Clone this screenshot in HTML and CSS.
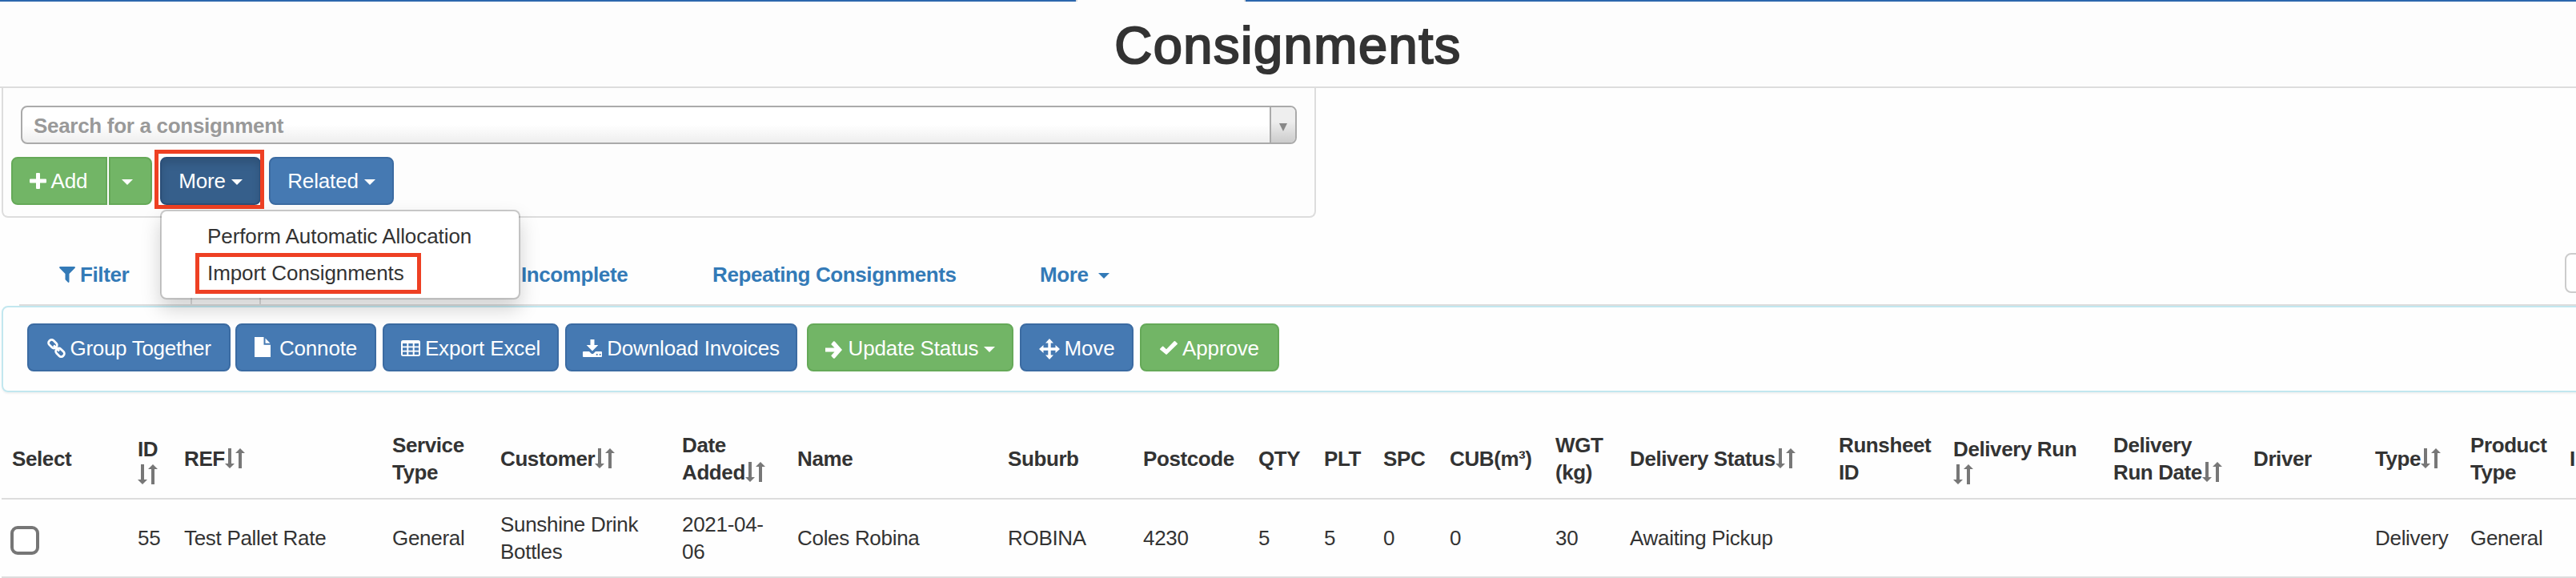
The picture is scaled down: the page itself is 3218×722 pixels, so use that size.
FILE: index.html
```html
<!DOCTYPE html>
<html lang="en">
<head>
    <meta charset="UTF-8">
    <meta name="viewport" content="width=device-width, initial-scale=1.0">
    <title>Consignments</title>
    <link rel="stylesheet" href="styles.css">
</head>
<body>
    <svg class="sprite" width="0" height="0">
        <symbol id="sort" viewBox="0 0 25 25">
            <path d="M4 0h4v19h4l-6 6-6-6h4zM17 25h4V6h4l-6-6-6 6h4z"/>
        </symbol>
    </svg>

    <div class="topbar"><span class="topbar-tab"></span></div>
    <header class="page-header">
        <h1>Consignments</h1>
    </header>

    <section class="well">
        <div class="search">
            <span class="search-text">Search for a consignment</span>
            <span class="search-arrow"><i></i></span>
        </div>
        <div class="actions">
            <button class="btn green add">
                <svg class="icon" width="21" height="20" viewBox="0 0 21 20"><path d="M8 1q0-1 1-1h3q1 0 1 1v6.500h7q1 0 1 1v3q0 1-1 1h-7V19q0 1-1 1H9q-1 0-1-1v-6.500H1q-1 0-1-1v-3q0-1 1-1h7z"/></svg>
                Add
            </button>
            <button class="btn green add-caret"><i class="caret"></i></button>
            <div class="dropdown">
                <button class="btn blue active more">More <i class="caret"></i></button>
                <span class="mark mark-more"></span>
                <ul class="menu">
                    <li>Perform Automatic Allocation</li>
                    <li>Import Consignments<span class="mark mark-import"></span></li>
                </ul>
            </div>
            <button class="btn blue related">Related <i class="caret"></i></button>
        </div>
    </section>

    <nav class="tabs">
        <a class="tab tab-filter">
            <svg class="icon" width="20" height="20" viewBox="0 0 20 20"><path d="M1 0h18q1.500.5.700 1.800L12.500 9v10q-.4 1.300-1.500.7l-3-3q-.500-.4-.5-1V9L.3 1.800Q-.4.5 1 0z"/></svg>
            Filter
        </a>
        <a class="tab-current"></a>
        <span></span>
        <a class="tab">Incomplete</a>
        <a class="tab">Repeating Consignments</a>
        <a class="tab">More <i class="caret"></i></a>
        <input class="tab-search" type="text">
    </nav>

    <section class="toolbar">
        <button class="btn blue group">
            <svg class="icon" width="23" height="24" viewBox="0 0 23 24"><g fill="none" stroke="#fff" stroke-width="2.800"><rect x="1.200" y="3" width="11.500" height="7.500" rx="3.300" transform="rotate(45 7 6.700)"/><rect x="10.300" y="13.500" width="11.500" height="7.500" rx="3.300" transform="rotate(45 16 17.200)"/><path d="M8 8.500l7 7"/></g></svg>
            Group Together
        </button>
        <button class="btn blue connote">
            <svg class="icon icon-file" width="20" height="25" viewBox="0 0 20 25"><path d="M0 0h11.500v9.700H20V25H0zM13.500 1.500l6 6.300h-6z"/></svg>
            Connote
        </button>
        <button class="btn blue export">
            <svg class="icon" width="24" height="20" viewBox="0 0 24 20"><path fill-rule="evenodd" d="M2.500 0h19Q24 0 24 2.500v15q0 2.500-2.500 2.500h-19Q0 20 0 17.500v-15Q0 0 2.500 0zM2 4v3.500h5.300V4zm7.300 0v3.500h5.400V4zm7.400 0v3.500H22V4zM2 9.300v3.500h5.300V9.300zm7.300 0v3.500h5.400V9.300zm7.400 0v3.500H22V9.300zM2 14.600V18h5.300v-3.400zm7.300 0V18h5.400v-3.400zm7.400 0V18H22v-3.400z"/></svg>
            Export Excel
        </button>
        <button class="btn blue download">
            <svg class="icon" width="24" height="22" viewBox="0 0 24 22"><path fill-rule="evenodd" d="M9.500 0h5v7h4.800L12 14.500 4.700 7h4.800zM1 15h7l2.500 2.500q1.500 1 3 0L16 15h7q1 0 1 1v5q0 1-1 1H1q-1 0-1-1v-5q0-1 1-1zm15.800 3v1.800h1.800V18zm4 0v1.800h1.800V18z"/></svg>
            Download Invoices
        </button>
        <button class="btn green update">
            <svg class="icon icon-arrow" width="21" height="22" viewBox="0 0 21 22"><path d="M0 8.500h11.500L7.800 4.800q-.8-.8 0-1.600L10 .6q1-.9 1.800 0L21 11l-9.200 10.400q-.8.900-1.800 0L7.800 19q-.8-.8 0-1.600l3.700-3.900H0z"/></svg>
            Update Status <i class="caret"></i>
        </button>
        <button class="btn blue move">
            <svg class="icon icon-move" width="26" height="26" viewBox="0 0 26 26"><path d="M13 0l5 5.500h-3.300v5.800h5.800V8l5.500 5-5.500 5v-3.300h-5.800v5.800H18L13 26l-5-5.500h3.300v-5.800H5.500V18L0 13l5.500-5v3.300h5.800V5.500H8z"/></svg>
            Move
        </button>
        <button class="btn green approve">
            <svg class="icon" width="22" height="17" viewBox="0 0 22 17"><path d="M.3 9.500L3 6.800q.7-.5 1.300 0L8 10.200 17.700.3q.7-.6 1.400 0l2.600 2.500q.6.700 0 1.300L8.800 16.600q-.8.700-1.500 0l-7-5.800q-.6-.7 0-1.300z"/></svg>
            Approve
        </button>
    </section>

    <table class="list">
        <colgroup>
            <col class="c-select"><col class="c-id"><col class="c-ref"><col class="c-service"><col class="c-customer">
            <col class="c-date"><col class="c-name"><col class="c-suburb"><col class="c-postcode"><col class="c-qty">
            <col class="c-plt"><col class="c-spc"><col class="c-cub"><col class="c-wgt"><col class="c-status">
            <col class="c-runsheet"><col class="c-run"><col class="c-rundate"><col class="c-driver"><col class="c-type">
            <col class="c-product"><col class="c-last">
        </colgroup>
        <thead>
            <tr>
                <th>Select</th>
                <th class="low">ID<br><svg class="sort"><use href="#sort"/></svg></th>
                <th>REF<svg class="sort"><use href="#sort"/></svg></th>
                <th>Service<br>Type</th>
                <th>Customer<svg class="sort"><use href="#sort"/></svg></th>
                <th>Date<br>Added<svg class="sort"><use href="#sort"/></svg></th>
                <th>Name</th>
                <th>Suburb</th>
                <th>Postcode</th>
                <th>QTY</th>
                <th>PLT</th>
                <th>SPC</th>
                <th>CUB(m³)</th>
                <th>WGT<br>(kg)</th>
                <th>Delivery Status<svg class="sort"><use href="#sort"/></svg></th>
                <th>Runsheet<br>ID</th>
                <th class="low">Delivery Run<br><svg class="sort"><use href="#sort"/></svg></th>
                <th>Delivery<br>Run Date<svg class="sort"><use href="#sort"/></svg></th>
                <th>Driver</th>
                <th>Type<svg class="sort"><use href="#sort"/></svg></th>
                <th>Product<br>Type</th>
                <th>I</th>
            </tr>
        </thead>
        <tbody>
            <tr>
                <td><span class="checkbox"></span></td>
                <td>55</td>
                <td>Test Pallet Rate</td>
                <td>General</td>
                <td>Sunshine Drink<br>Bottles</td>
                <td>2021-04-<br>06</td>
                <td>Coles Robina</td>
                <td>ROBINA</td>
                <td>4230</td>
                <td>5</td>
                <td>5</td>
                <td>0</td>
                <td>0</td>
                <td>30</td>
                <td>Awaiting Pickup</td>
                <td></td>
                <td></td>
                <td></td>
                <td></td>
                <td>Delivery</td>
                <td>General</td>
                <td></td>
            </tr>
        </tbody>
    </table>
</body>
</html>
```
FILE: styles.css
```css
* {
    box-sizing: border-box;
}
body {
    margin: 0;
    height: 722px;
    overflow: hidden;
    background-color: #fefefe;
    color: #333;
    font-family: "Liberation Sans", Arial, sans-serif;
    font-size: 26px;
    line-height: 34px;
    letter-spacing: -0.15px;
}
.sprite {
    display: block;
}
.topbar {
    height: 2px;
    background-color: #2c67ad;
}
.topbar-tab {
    display: block;
    width: 212px;
    height: 2px;
    margin-left: 1344px;
    background-color: #fdfdfd;
    border-left: 2px solid #ddd;
    border-right: 2px solid #ddd;
}
.page-header {
    height: 108px;
    background-color: #fdfdfd;
    border-bottom: 2px solid #ddd;
}
h1 {
    margin: 0;
    padding-top: 19px;
    text-align: center;
    font-size: 65px;
    font-weight: normal;
    line-height: 72px;
    letter-spacing: 1.5px;
    -webkit-text-stroke: 2.2px #333;
}
.well {
    width: 1642px;
    height: 162px;
    margin-left: 2px;
    padding: 22px 0 0 10px;
    background-color: #fdfdfd;
    border: 2px solid #ddd;
    border-top: none;
    border-radius: 0 0 8px 8px;
}
.search {
    display: flex;
    width: 1594px;
    height: 48px;
    margin-left: 12px;
    border: 2px solid #aaa;
    border-radius: 8px;
    background: linear-gradient(#fff 50%, #eee);
    overflow: hidden;
}
.search-text {
    flex: 1;
    padding-left: 14px;
    line-height: 46px;
    font-weight: bold;
    color: #999;
    letter-spacing: -0.3px;
}
.search-arrow {
    display: flex;
    align-items: center;
    justify-content: center;
    width: 32px;
    border-left: 2px solid #aaa;
    background: linear-gradient(#eee 40%, #ccc);
}
.search-arrow i {
    margin-top: 5px;
    border: 5px solid transparent;
    border-top: 10px solid #888;
    border-bottom: none;
}
.actions {
    display: flex;
    margin-top: 16px;
}
.btn {
    display: flex;
    align-items: center;
    justify-content: center;
    flex: none;
    height: 60px;
    padding: 0;
    border: 2px solid;
    border-radius: 8px;
    color: #fff;
    font: inherit;
    letter-spacing: inherit;
    white-space: nowrap;
}
.green {
    background-color: #72b566;
    border-color: #65a958;
}
.blue {
    background-color: #4579b2;
    border-color: #3b6ba2;
}
.active {
    background-color: #365f8b;
    border-color: #2a4e78;
    box-shadow: inset 0 6px 10px rgba(0, 0, 0, 0.125);
}
.icon {
    flex: none;
    margin-right: 6px;
    fill: currentColor;
}
.caret {
    display: inline-block;
    margin: 3px 0 0 7px;
    border: 7px solid transparent;
    border-top: 7px solid;
    border-bottom: none;
}
.add {
    width: 120px;
    padding-right: 2px;
    border-radius: 8px 0 0 8px;
}
.add-caret {
    width: 54px;
    margin-left: 2px;
    padding-right: 8px;
    border-radius: 0 8px 8px 0;
}
.add-caret .caret {
    margin-left: 0;
}
.dropdown {
    position: relative;
    margin-left: 10px;
}
.more {
    width: 126px;
}
.related {
    width: 156px;
    margin-left: 10px;
}
.mark {
    position: absolute;
    border: 5px solid #ee4023;
}
.mark-more {
    left: -7px;
    top: -9px;
    width: 137px;
    height: 74px;
}
.mark-import {
    left: -15px;
    top: -2px;
    width: 282px;
    height: 51px;
}
.menu {
    position: absolute;
    z-index: 5;
    left: 0;
    top: 66px;
    width: 450px;
    height: 112px;
    margin: 0;
    padding: 8px 0 0 57px;
    list-style: none;
    background-color: #fff;
    background-clip: padding-box;
    border: 2px solid rgba(0, 0, 0, 0.2);
    border-radius: 8px;
    box-shadow: 0 12px 24px rgba(0, 0, 0, 0.175);
    letter-spacing: -0.08px;
}
.menu li {
    position: relative;
    height: 46px;
    line-height: 46px;
    white-space: nowrap;
}
.tabs {
    display: grid;
    grid-template-columns: 214px 88px 325px 239px 409px 1905px 40px;
    align-items: end;
    width: 3218px;
    height: 110px;
    margin-left: 24px;
    border-bottom: 2px solid #ddd;
}
.tab {
    display: flex;
    align-items: center;
    padding-bottom: 20px;
    color: #337ab7;
    font-weight: bold;
    letter-spacing: -0.4px;
}
.tab .caret {
    margin-left: 12px;
}
.tab-filter {
    padding-left: 50px;
}
.tab-current {
    height: 60px;
    border: 2px solid #ddd;
    border-bottom: none;
}
.tab-search {
    height: 50px;
    margin-bottom: 14px;
    border: 2px solid #ccc;
    border-radius: 8px;
    background-color: #fff;
}
.toolbar {
    display: flex;
    width: 3240px;
    height: 108px;
    margin-left: 2px;
    padding: 20px 0 0 30px;
    border: 2px solid #c2e7ef;
    border-radius: 8px;
    box-shadow: 0 2px 2px rgba(0, 0, 0, 0.05);
}
.toolbar .btn {
    padding-top: 1px;
}
.group {
    width: 254px;
    letter-spacing: -0.3px;
}
.connote {
    width: 176px;
    margin-left: 6px;
}
.icon-file {
    margin: 0 11px 2px 0;
}
.export {
    width: 220px;
    margin-left: 8px;
}
.download {
    width: 290px;
    margin-left: 8px;
}
.update {
    width: 258px;
    margin-left: 12px;
}
.icon-arrow {
    margin: 4px 8px 0 0;
}
.move {
    width: 142px;
    margin-left: 8px;
}
.icon-move {
    margin-top: 2px;
}
.approve {
    width: 174px;
    margin-left: 8px;
}
.list {
    width: 3308px;
    margin: 34px 0 0 2px;
    table-layout: fixed;
    border-collapse: separate;
    border-spacing: 0;
}
th, td {
    height: 98px;
    padding: 14px 0 14px 13px;
    border-bottom: 2px solid #ddd;
    text-align: left;
    vertical-align: middle;
    white-space: nowrap;
    letter-spacing: -0.3px;
}
th {
    height: 100px;
    padding: 15px 0 15px 13px;
    letter-spacing: -0.4px;
}
th.low {
    padding: 20px 0 10px 13px;
}
.sort {
    width: 25px;
    height: 25px;
    fill: #777;
    vertical-align: -3px;
}
.low .sort {
    vertical-align: -1px;
}
.checkbox {
    display: block;
    width: 36px;
    height: 36px;
    margin: 5px 0 0 -2px;
    border: 4px solid #767676;
    border-radius: 9px;
    background-color: #fff;
}
.c-select { width: 157px; }
.c-id { width: 58px; }
.c-ref { width: 260px; }
.c-service { width: 135px; }
.c-customer { width: 227px; }
.c-date { width: 144px; }
.c-name { width: 263px; }
.c-suburb { width: 169px; }
.c-postcode { width: 144px; }
.c-qty { width: 82px; }
.c-plt { width: 74px; }
.c-spc { width: 83px; }
.c-cub { width: 132px; }
.c-wgt { width: 93px; }
.c-status { width: 261px; }
.c-runsheet { width: 143px; }
.c-run { width: 200px; }
.c-rundate { width: 175px; }
.c-driver { width: 152px; }
.c-type { width: 119px; }
.c-product { width: 124px; }
.c-last { width: 113px; }
```
